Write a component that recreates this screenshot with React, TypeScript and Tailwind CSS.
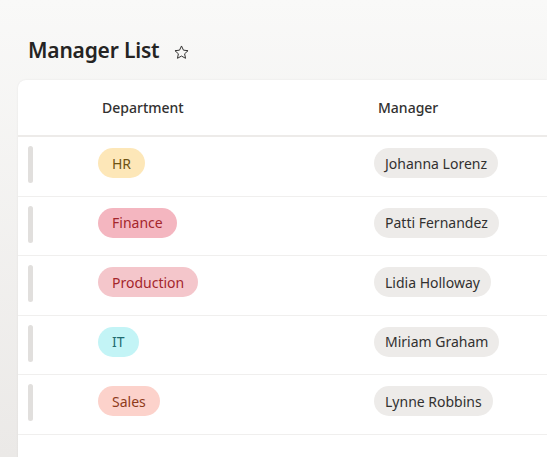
import React from 'react';

interface Row {
  dept: string;
  deptClass: string;
  manager: string;
}

const rows: Row[] = [
  { dept: 'HR', deptClass: 'bg-[#fde7b8] text-[#6f5312]', manager: 'Johanna Lorenz' },
  { dept: 'Finance', deptClass: 'bg-[#f4b6c0] text-[#a4262c]', manager: 'Patti Fernandez' },
  { dept: 'Production', deptClass: 'bg-[#f4c6cb] text-[#a4262c]', manager: 'Lidia Holloway' },
  { dept: 'IT', deptClass: 'bg-[#c3f4f6] text-[#1f6b70]', manager: 'Miriam Graham' },
  { dept: 'Sales', deptClass: 'bg-[#fcd2cb] text-[#8e3b1a]', manager: 'Lynne Robbins' },
];

const StarIcon = () => (
  <svg width="17" height="17" viewBox="0 0 24 24" fill="none" stroke="#323130" strokeWidth="1.4" strokeLinejoin="round">
    <path d="M12 2.8l2.75 5.9 6.45.75-4.8 4.4 1.3 6.35L12 17l-5.7 3.2 1.3-6.35-4.8-4.4 6.45-.75z" />
  </svg>
);

export default function App() {
  return (
    <div
      className="w-[547px] h-[457px] overflow-hidden bg-gradient-to-b from-[#f9f9f8] to-[#ebe9e7] text-[#323130]"
      style={{ fontFamily: '"Noto Sans", "Open Sans", Arial, sans-serif' }}
    >
      <div className="flex items-center h-[80px] pl-[28px] pt-[22px]">
        <h1 className="text-[21px] font-semibold text-[#252423] tracking-[-0.2px]">Manager List</h1>
        <span className="ml-[14px] mt-[3px]"><StarIcon /></span>
      </div>
      <div className="ml-[18px] bg-white rounded-tl-[8px] h-[400px] shadow-[0_0_2px_rgba(0,0,0,0.08)]">
        <div className="flex items-center h-[57px] border-b-2 border-[#edebe9] text-[14px] font-medium text-[#323130]">
          <div className="w-[360px] pl-[84px]">Department</div>
          <div>Manager</div>
        </div>
        {rows.map((r) => (
          <div key={r.dept} className="flex items-center h-[59.5px] border-b border-[#f0efee]">
            <div className="w-[80px] pl-[10px] flex items-center mb-[3px]">
              <div className="w-[5px] h-[37px] rounded-full bg-[#e1dfdd]" />
            </div>
            <div className="w-[276px] mb-[6px]">
              <span className={`inline-flex items-center h-[30px] px-[14px] rounded-full text-[14px] ${r.deptClass}`}>
                {r.dept}
              </span>
            </div>
            <div className="mb-[6px]">
              <span className="inline-flex items-center h-[30px] px-[11px] rounded-full text-[14px] bg-[#edebe9] text-[#323130]">
                {r.manager}
              </span>
            </div>
          </div>
        ))}
      </div>
    </div>
  );
}
